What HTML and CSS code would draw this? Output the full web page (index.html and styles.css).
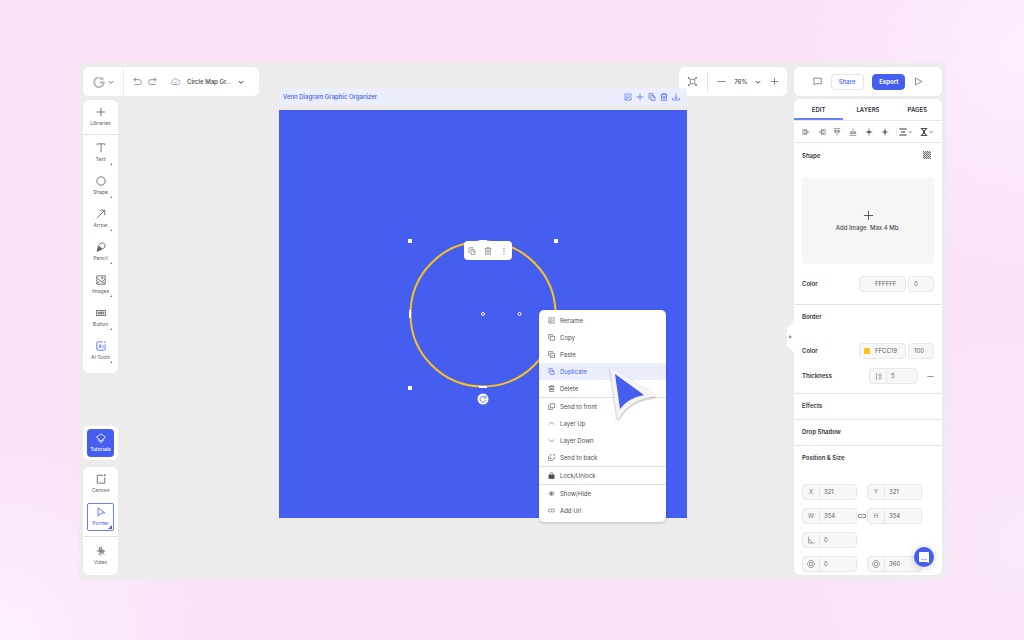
FILE: index.html
```html
<!DOCTYPE html>
<html lang="en">
<head>
    <meta charset="UTF-8">
    <meta name="viewport" content="width=device-width, initial-scale=1.0">
    <title>Circle Map Graphic Organizer</title>
    <link rel="stylesheet" href="styles.css">
</head>
<body>
<!-- Icon sprite -->
<svg class="sprite" width="0" height="0" aria-hidden="true">
    <symbol id="plus" viewBox="0 0 24 24"><path d="M12 2v20M2 12h20"/></symbol>
    <symbol id="minus" viewBox="0 0 24 24"><path d="M1 12h22"/></symbol>
    <symbol id="down" viewBox="0 0 24 24"><path d="M3 8l9 9 9-9"/></symbol>
    <symbol id="up" viewBox="0 0 24 24"><path d="M3 16l9-9 9 9"/></symbol>
    <symbol id="undo" viewBox="0 0 24 24"><path d="M8 2L2 7l6 5M2 7h14a6 6 0 0 1 0 13H4"/></symbol>
    <symbol id="redo" viewBox="0 0 24 24"><path d="M16 2l6 5-6 5M22 7H8a6 6 0 0 0 0 13h12"/></symbol>
    <symbol id="cloud" viewBox="0 0 24 24"><path d="M6 20a5 5 0 0 1-1-10 7 7 0 0 1 13-2 6 6 0 0 1 1 12zM8 14l3 3 6-6"/></symbol>
    <symbol id="logo" viewBox="0 0 24 24"><path d="M11 3a9.500 9.500 0 1 0 10.500 10H13M15 2l0 5M20 4l-2 4" stroke-width="4"/></symbol>
    <symbol id="text" viewBox="0 0 24 24"><path d="M3 5V2h18v3M12 2v20"/></symbol>
    <symbol id="circle" viewBox="0 0 24 24"><circle cx="12" cy="12" r="10"/></symbol>
    <symbol id="arrow" viewBox="0 0 24 24"><path d="M2 22L21 3M9 3h12v12"/></symbol>
    <symbol id="pencil" viewBox="0 0 24 24"><path d="M3 22L6 9c4-9 15-9 16-1 0 6-5 9-9 9zM3 22l9-10"/><path d="M3 22l4-11 7 6z" fill="currentColor"/></symbol>
    <symbol id="image" viewBox="0 0 24 24"><path d="M2 2h20v20H2zM3 21l7-8 4 4 8-8M14 15l7 6M3 6l5 6"/><circle cx="15" cy="7" r="2"/></symbol>
    <symbol id="button" viewBox="0 0 24 24"><path d="M1 6h22v12H1zM5 10h14v4H5zM10 10v4M14 10v4"/></symbol>
    <symbol id="ai" viewBox="0 0 24 24"><path d="M16 2H5a3 3 0 0 0-3 3v14a3 3 0 0 0 3 3h14a3 3 0 0 0 3-3V8M21 1v4" stroke-width="2"/><path d="M7 17l3-9 3 9M8 14h4M17 9v8" stroke-width="1.500"/></symbol>
    <symbol id="tutorial" viewBox="0 0 24 24"><path d="M1 10l11-8 11 8-11 9zM7 15v4l5 4 5-4v-4"/></symbol>
    <symbol id="frame" viewBox="0 0 24 24"><path d="M17 3H3v19h18V8M19 3h4M21 1v4"/></symbol>
    <symbol id="pointer" viewBox="0 0 24 24"><path d="M5 2l16 12-9 1-7 7z"/></symbol>
    <symbol id="video" viewBox="0 0 24 24"><path d="M12 1v22M8 3v9h4M2 12h20M12 5l4 4M17 9v8M12 13l-6 8M12 13l8 8"/></symbol>
    <symbol id="fit" viewBox="0 0 24 24"><path d="M6 6h12v12H6zM6 6L1 1M18 6l5-5M6 18l-5 5M18 18l5 5M1 5V1h4M19 1h4v4M1 19v4h4M19 23h4v-4"/></symbol>
    <symbol id="edit" viewBox="0 0 24 24"><path d="M13 3H3v18h18V11M8 16l1-5L19 1l4 4-10 10z"/></symbol>
    <symbol id="copy" viewBox="0 0 24 24"><path d="M9 7h7l5 5v10H9zM5 17H3V2h12v2M15 7v6h6"/></symbol>
    <symbol id="trash" viewBox="0 0 24 24"><path d="M2 5h20M8 5V2h8v3M4 5l1 17h14l1-17M9 9v9M12 9v9M15 9v9"/></symbol>
    <symbol id="download" viewBox="0 0 24 24"><path d="M12 2v15M7 12l5 5 5-5M2 15v6h20v-6"/></symbol>
    <symbol id="dots" viewBox="0 0 24 24"><g fill="currentColor" stroke="none"><circle cx="12" cy="4" r="2"/><circle cx="12" cy="12" r="2"/><circle cx="12" cy="20" r="2"/></g></symbol>
    <symbol id="layers" viewBox="0 0 24 24"><path d="M8 2h14v14H8zM5 8H2v14h14v-3"/></symbol>
    <symbol id="copies" viewBox="0 0 24 24"><path d="M8 8h14v14H8zM5 16H2V2h14v3"/></symbol>
    <symbol id="paste" viewBox="0 0 24 24"><path d="M8 8h14v14H8zM5 16H2V2h14v3M12 15l2 3 5-5"/></symbol>
    <symbol id="back" viewBox="0 0 24 24"><path d="M12 2H8v4M17 2h5v4M22 10v6h-4M8 10v6h5M5 8H2v14h14v-3"/></symbol>
    <symbol id="lock" viewBox="0 0 24 24"><path d="M3 10h18v13H3z" fill="currentColor"/><path d="M7 11V7a5 5 0 0 1 10 0v4"/></symbol>
    <symbol id="eye" viewBox="0 0 24 24"><path d="M1 12c6-8 16-8 22 0-6 8-16 8-22 0z"/><circle cx="12" cy="12" r="3" fill="currentColor"/></symbol>
    <symbol id="link" viewBox="0 0 24 24"><path d="M10 7H6a5 5 0 0 0 0 10h3c3 0 4-2 4-4M14 17h4a5 5 0 0 0 0-10h-3c-3 0-4 2-4 4"/></symbol>
    <symbol id="chat" viewBox="0 0 24 24"><path d="M2 3h20v15H7l-4 3z"/></symbol>
    <symbol id="play" viewBox="0 0 24 24"><path d="M4 3l17 9L4 21z"/></symbol>
    <symbol id="al-left" viewBox="0 0 24 24"><path d="M3 2v20M7 5h7v4H7zM7 15h7v4H7zM22 12h-9M17 8l-4 4 4 4"/></symbol>
    <symbol id="al-right" viewBox="0 0 24 24"><path d="M21 2v20M10 5h7v4h-7zM10 15h7v4h-7zM2 12h9M7 8l4 4-4 4"/></symbol>
    <symbol id="al-top" viewBox="0 0 24 24"><path d="M2 2h20M5 7h3v6H5zM16 7h3v6h-3zM12 22V7M9 10l3-3 3 3"/></symbol>
    <symbol id="al-bottom" viewBox="0 0 24 24"><path d="M2 22h20M5 11h3v6H5zM16 11h3v6h-3zM12 2v15M9 14l3 3 3-3"/></symbol>
    <symbol id="al-mid" viewBox="0 0 24 24"><path d="M12 1v22M2 12h20"/><path d="M8 9h8v6H8z" fill="currentColor"/></symbol>
    <symbol id="al-center" viewBox="0 0 24 24"><path d="M12 1v22M2 12h20"/><path d="M9 8h6v8H9z" fill="currentColor"/></symbol>
    <symbol id="dist-v" viewBox="0 0 24 24"><path d="M1 3h22M1 21h22M6 12h12" stroke-width="3"/></symbol>
    <symbol id="dist-h" viewBox="0 0 24 24"><path d="M2 2h20M2 22h20M6 3l6 9-6 9M18 3l-6 9 6 9M12 6v12" stroke-width="3"/></symbol>
    <symbol id="pattern" viewBox="0 0 24 24"><g stroke-width="3" stroke-dasharray="3 3"><path d="M0 2h24M3 5h21M0 8h24M3 11h21M0 14h24M3 17h21M0 20h24M3 23h21"/></g></symbol>
    <symbol id="thick" viewBox="0 0 24 24"><path d="M5 3v18M2 3h6M2 21h6M12 4h11M12 9h11M12 14h11M12 20h11"/></symbol>
    <symbol id="angle" viewBox="0 0 24 24"><path d="M5 2v19h17M5 11c6 0 9 4 9 10"/></symbol>
    <symbol id="ring" viewBox="0 0 24 24"><path d="M7 2h10l6 10-6 10H7L1 12z"/><circle cx="12" cy="12" r="5"/></symbol>
</svg>

<div class="app">
    <main class="main">
        <header class="topbar">
            <div class="card file-bar">
                <button class="logo-button" aria-label="Menu"><svg class="icon logo"><use href="#logo"/></svg><svg class="icon small"><use href="#down"/></svg></button>
                <button aria-label="Undo"><svg class="icon"><use href="#undo"/></svg></button>
                <button aria-label="Redo"><svg class="icon"><use href="#redo"/></svg></button>
                <button class="file-name"><svg class="icon cloud"><use href="#cloud"/></svg><span>Circle Map Gr...</span><svg class="icon small"><use href="#down"/></svg></button>
            </div>
            <div class="card zoom-bar">
                <button class="fit" aria-label="Fit to screen"><svg class="icon"><use href="#fit"/></svg></button>
                <button aria-label="Zoom out"><svg class="icon"><use href="#minus"/></svg></button>
                <button class="zoom-value">76% <svg class="icon small"><use href="#down"/></svg></button>
                <button aria-label="Zoom in"><svg class="icon"><use href="#plus"/></svg></button>
            </div>
        </header>

        <aside class="tools">
            <div class="card tool-list">
                <button class="tool first"><svg class="icon"><use href="#plus"/></svg>Libraries</button>
                <button class="tool more"><svg class="icon"><use href="#text"/></svg>Text</button>
                <button class="tool more"><svg class="icon"><use href="#circle"/></svg>Shape</button>
                <button class="tool more"><svg class="icon"><use href="#arrow"/></svg>Arrow</button>
                <button class="tool more"><svg class="icon"><use href="#pencil"/></svg>Pencil</button>
                <button class="tool more"><svg class="icon"><use href="#image"/></svg>Images</button>
                <button class="tool more"><svg class="icon"><use href="#button"/></svg>Button</button>
                <button class="tool more"><svg class="icon blue"><use href="#ai"/></svg>AI Tools</button>
            </div>
            <div class="card tutorials">
                <button class="tool"><svg class="icon"><use href="#tutorial"/></svg>Tutorials</button>
            </div>
            <div class="card modes">
                <button class="tool"><svg class="icon"><use href="#frame"/></svg>Canvas</button>
                <button class="tool more selected"><svg class="icon"><use href="#pointer"/></svg>Pointer</button>
                <button class="tool last"><svg class="icon"><use href="#video"/></svg>Video</button>
            </div>
        </aside>

        <section class="page">
            <div class="page-header">
                <h1>Venn Diagram Graphic Organizer</h1>
                <button aria-label="Rename page"><svg class="icon"><use href="#edit"/></svg></button>
                <button aria-label="Add page"><svg class="icon"><use href="#plus"/></svg></button>
                <button aria-label="Copy page"><svg class="icon"><use href="#copy"/></svg></button>
                <button aria-label="Delete page"><svg class="icon"><use href="#trash"/></svg></button>
                <button aria-label="Download page"><svg class="icon"><use href="#download"/></svg></button>
            </div>
            <div class="artboard">
                <svg class="drawing" viewBox="0 0 408 408">
                    <circle cx="204" cy="204" r="72.5" fill="none" stroke="#f9c31f" stroke-width="2"/>
                    <g fill="#fff">
                        <rect x="129" y="129" width="4" height="4"/>
                        <rect x="275" y="129" width="4" height="4"/>
                        <rect x="129" y="276" width="4" height="4"/>
                        <rect x="200" y="130" width="8" height="2"/>
                        <rect x="200" y="276" width="8" height="2"/>
                        <rect x="130" y="200" width="2" height="8"/>
                        <circle cx="204" cy="289" r="5.5"/>
                    </g>
                    <g fill="#455eef" stroke="#fff">
                        <circle cx="204" cy="204" r="1.5"/>
                        <circle cx="240.5" cy="204" r="1.5"/>
                    </g>
                    <path d="M206.500 287.500a3 3 0 1 0 .5 2.500M207 285.500v2.500h-2.500" fill="none" stroke="#6f80df"/>
                </svg>
                <div class="mini-bar">
                    <button aria-label="Copy"><svg class="icon"><use href="#copy"/></svg></button>
                    <button aria-label="Delete"><svg class="icon"><use href="#trash"/></svg></button>
                    <button aria-label="More"><svg class="icon"><use href="#dots"/></svg></button>
                </div>
                <div class="menu">
                    <button><svg class="icon"><use href="#edit"/></svg>Rename</button>
                    <button><svg class="icon"><use href="#copies"/></svg>Copy</button>
                    <button><svg class="icon"><use href="#paste"/></svg>Paste</button>
                    <button class="active"><svg class="icon"><use href="#copy"/></svg>Duplicate</button>
                    <button><svg class="icon"><use href="#trash"/></svg>Delete</button>
                    <hr>
                    <button><svg class="icon"><use href="#layers"/></svg>Send to front</button>
                    <button><svg class="icon"><use href="#up"/></svg>Layer Up</button>
                    <button><svg class="icon"><use href="#down"/></svg>Layer Down</button>
                    <button><svg class="icon"><use href="#back"/></svg>Send to back</button>
                    <hr>
                    <button><svg class="icon"><use href="#lock"/></svg>Lock/Unlock</button>
                    <hr>
                    <button><svg class="icon"><use href="#eye"/></svg>Show/Hide</button>
                    <button><svg class="icon"><use href="#link"/></svg>Add Url</button>
                </div>
                <svg class="cursor" viewBox="0 0 54 64">
                    <path d="M5 5Q3 3 5 5L48 32Q51 35 47 35Q24 38 13 56Q11 59 11 55L4 7z" fill="#f4f4f6"/>
                    <path d="M9 12L38 33Q22 36 14 47z" fill="#455eef"/>
                </svg>
            </div>
        </section>
    </main>

    <aside class="side">
        <div class="card share-bar">
            <button aria-label="Comments"><svg class="icon"><use href="#chat"/></svg></button>
            <button class="share">Share</button>
            <button class="export">Export</button>
            <button aria-label="Preview"><svg class="icon"><use href="#play"/></svg></button>
        </div>
        <button class="collapse" aria-label="Collapse panel"><svg viewBox="0 0 7 30"><path d="M7 0L2 4Q0 5 0 7v16q0 2 2 3l5 4z" fill="#fff"/><path d="M2 13l3 2-3 2z" fill="#999"/></svg></button>
        <div class="card panel">
            <nav class="tabs">
                <button class="active">EDIT</button>
                <button>LAYERS</button>
                <button>PAGES</button>
            </nav>
            <div class="align">
                <button aria-label="Align left"><svg class="icon"><use href="#al-left"/></svg></button>
                <button aria-label="Align right"><svg class="icon"><use href="#al-right"/></svg></button>
                <button aria-label="Align top"><svg class="icon"><use href="#al-top"/></svg></button>
                <button aria-label="Align bottom"><svg class="icon"><use href="#al-bottom"/></svg></button>
                <button aria-label="Align middle"><svg class="icon"><use href="#al-mid"/></svg></button>
                <button aria-label="Align center"><svg class="icon"><use href="#al-center"/></svg></button>
                <button class="distribute" aria-label="Distribute vertically"><svg class="icon"><use href="#dist-v"/></svg><svg class="icon tiny"><use href="#down"/></svg></button>
                <button aria-label="Distribute horizontally"><svg class="icon"><use href="#dist-h"/></svg><svg class="icon tiny"><use href="#down"/></svg></button>
            </div>
            <section class="section">
                <div class="section-title"><h2>Shape</h2><svg class="icon"><use href="#pattern"/></svg></div>
                <button class="upload"><svg class="icon"><use href="#plus"/></svg>Add Image. Max 4 Mb.</button>
                <div class="row">
                    <label for="fill">Color</label>
                    <span class="field color"><i class="swatch"></i><input id="fill" value="FFFFFF"></span>
                    <span class="field opacity"><input aria-label="Fill opacity" value="0"></span>
                </div>
            </section>
            <section class="section border">
                <h2>Border</h2>
                <div class="row">
                    <label for="stroke">Color</label>
                    <span class="field color"><i class="swatch yellow"></i><input id="stroke" value="FFCC19"></span>
                    <span class="field opacity"><input aria-label="Border opacity" value="100"></span>
                </div>
                <div class="row">
                    <label for="thickness">Thickness</label>
                    <span class="field thickness"><span class="prefix"><svg class="icon"><use href="#thick"/></svg></span><input id="thickness" value="5"></span>
                    <button aria-label="Remove border"><svg class="icon"><use href="#minus"/></svg></button>
                </div>
            </section>
            <section class="section"><h2>Effects</h2></section>
            <section class="section"><h2>Drop Shadow</h2></section>
            <section class="section position">
                <h2>Position &amp; Size</h2>
                <div class="grid">
                    <label class="field"><span class="prefix">X</span><input value="321"></label>
                    <span></span>
                    <label class="field"><span class="prefix">Y</span><input value="321"></label>
                    <label class="field"><span class="prefix">W</span><input value="354"></label>
                    <svg class="icon"><use href="#link"/></svg>
                    <label class="field"><span class="prefix">H</span><input value="354"></label>
                    <label class="field"><span class="prefix"><svg class="icon"><use href="#angle"/></svg></span><input aria-label="Rotation" value="0"></label>
                    <span></span>
                    <span></span>
                    <label class="field"><span class="prefix"><svg class="icon"><use href="#ring"/></svg></span><input aria-label="Arc start" value="0"></label>
                    <span></span>
                    <label class="field"><span class="prefix"><svg class="icon"><use href="#ring"/></svg></span><input aria-label="Arc end" value="360"></label>
                </div>
            </section>
            <button class="help" aria-label="Open chat"><svg viewBox="0 0 20 20"><path d="M6 5h8q1 0 1 1v10l-2-1H6q-1 0-1-1V6q0-1 1-1z" fill="#fff"/><path d="M7 12q3 2 6 0" fill="none" stroke="#9aa8f5"/></svg></button>
        </div>
    </aside>
</div>
</body>
</html>
```
FILE: styles.css
```css
* {
    box-sizing: border-box;
}

body {
    margin: 0;
    min-height: 100vh;
    display: flex;
    padding: 63px 78px 61px 79px;
    font-family: Inter, sans-serif;
    font-size: 6px;
    line-height: 10px;
    color: #4b4c55;
    background:
        radial-gradient(circle at 100% 8%, #fdeefd 0, #fdeefd00 220px),
        radial-gradient(circle at 0 100%, #fcf0fc 0, #fcf0fc00 200px),
        radial-gradient(circle at 100% 85%, #fbe8fa 0, #fbe8fa00 220px),
        #fae3f7;
}

h1, h2 {
    margin: 0;
    font-size: 6px;
    font-weight: 600;
}

button {
    display: flex;
    align-items: center;
    justify-content: center;
    padding: 0;
    border: none;
    background: none;
    font: inherit;
    color: inherit;
    cursor: pointer;
}

input {
    width: 100%;
    min-width: 0;
    padding: 0;
    border: none;
    background: none;
    font: inherit;
    color: #5a5b65;
}

.sprite {
    position: absolute;
}

.icon {
    display: block;
    flex: none;
    width: 9px;
    height: 9px;
    fill: none;
    stroke: currentColor;
    stroke-width: 2;
}

.icon.small {
    width: 6px;
    height: 6px;
    stroke-width: 4;
}

.icon.tiny {
    width: 4px;
    height: 4px;
    stroke-width: 4;
}

.icon.blue {
    color: #455eef;
}

.card {
    background: #ffffff;
    border-radius: 6px;
}

.app {
    flex: 1;
    display: flex;
    gap: 7px;
    padding: 4px;
    background: #ececec;
    border-radius: 4px;
}

.main {
    flex: 1;
    display: grid;
    grid-template-columns: 35px 1fr;
    grid-template-rows: 29px 1fr;
    row-gap: 4px;
}

/* Top bar */
.topbar {
    grid-column: 1 / -1;
    grid-row: 1;
    display: flex;
    justify-content: space-between;
}

.file-bar {
    display: flex;
    align-items: stretch;
    width: 176px;
    gap: 6px;
    color: #77787f;
}

.logo-button {
    gap: 3px;
    width: 41px;
    margin-right: 3px;
    border-right: 1px solid #ececec;
}

.icon.logo {
    width: 12px;
    height: 12px;
    color: #b9b9be;
}

.file-name {
    gap: 7px;
    margin-left: 8px;
    font-weight: 500;
    color: #3d3e48;
}

.icon.cloud {
    color: #8b90b8;
}

.zoom-bar {
    display: flex;
    align-items: center;
    width: 108px;
    padding: 0 8px 0 9px;
    justify-content: space-between;
    color: #666771;
}

.fit {
    height: 20px;
    padding-right: 10px;
    border-right: 1px solid #e4e4e6;
}

.zoom-value {
    gap: 8px;
    font-weight: 500;
    color: #3d3e48;
}

/* Tools */
.tools {
    grid-column: 1;
    grid-row: 2;
    display: flex;
    flex-direction: column;
    gap: 7px;
}

.tool {
    position: relative;
    flex-direction: column;
    gap: 2px;
    width: 100%;
    height: 33px;
    font-size: 5px;
    line-height: 8px;
    color: #5a5b65;
}

.tool .icon {
    width: 10px;
    height: 10px;
}

.tool.first {
    height: 35px;
    margin-bottom: 1px;
    border-bottom: 1px solid #e2e2e4;
}

.tool.more::after {
    content: "";
    position: absolute;
    right: 6px;
    bottom: 4px;
    border: 1px solid transparent;
    border-right-color: #77787f;
    border-bottom-color: #77787f;
}

.tool-list {
    padding-bottom: 6px;
}

.tutorials {
    margin-top: auto;
    padding: 3px 4px;
}

.tutorials .tool {
    height: 28px;
    border-radius: 4px;
    background: #455eef;
    font-weight: 500;
    color: #ffffff;
}

.modes {
    display: flex;
    flex-direction: column;
    align-items: center;
}

.tool.selected {
    width: 27px;
    height: 28px;
    margin: 3px 0 5px;
    border: 1px solid #6d80f2;
    border-radius: 2px;
    color: #455eef;
}

.tool.selected::after {
    right: 1px;
    bottom: 1px;
    border-width: 2px;
    border-right-color: #455eef;
    border-bottom-color: #455eef;
}

.tool.last {
    height: 39px;
    border-top: 1px solid #e2e2e4;
}

/* Page */
.page {
    grid-column: 2;
    grid-row: 1 / 3;
    justify-self: end;
    width: 408px;
    margin: 21px 100px 0 0;
}

.page-header {
    position: relative;
    display: flex;
    align-items: center;
    gap: 4px;
    height: 17px;
    padding: 0 7px 0 4px;
    margin-bottom: 5px;
    border-radius: 4px;
    background: #ebeefd;
    color: #455eef;
}

.page-header h1 {
    flex: 1;
    font-weight: 500;
}

.page-header .icon {
    width: 8px;
    height: 8px;
}

.artboard {
    position: relative;
    height: 408px;
    background: #455eef;
}

.drawing {
    display: block;
    width: 100%;
}

.mini-bar {
    position: absolute;
    top: 131px;
    left: 185px;
    display: flex;
    align-items: center;
    justify-content: space-around;
    width: 48px;
    height: 19px;
    border-radius: 4px;
    background: #ffffff;
    color: #77787f;
}

.mini-bar .icon {
    width: 8px;
    height: 8px;
}

.menu {
    position: absolute;
    top: 200px;
    left: 260px;
    width: 127px;
    padding: 2px 0 3px;
    border-radius: 5px;
    background: #ffffff;
    box-shadow: 0 1px 3px #00000033;
}

.menu button {
    justify-content: flex-start;
    gap: 5px;
    width: 100%;
    height: 17px;
    padding-left: 9px;
    color: #4b4c55;
}

.menu .icon {
    width: 7px;
    height: 7px;
}

.menu .active {
    background: #ebeefd;
    color: #455eef;
}

.menu hr {
    height: 1px;
    margin: 0;
    border: none;
    background: #dfdfe3;
}

.cursor {
    position: absolute;
    top: 252px;
    left: 327px;
    width: 54px;
    height: 64px;
    filter: drop-shadow(0 1px 1px #00000055);
}

/* Right side */
.side {
    position: relative;
    display: flex;
    flex-direction: column;
    gap: 3px;
    width: 148px;
}

.share-bar {
    display: flex;
    align-items: center;
    justify-content: space-between;
    height: 29px;
    padding: 0 19px;
    color: #666771;
}

.share, .export {
    width: 33px;
    height: 16px;
    border: 1px solid #e4e4e8;
    border-radius: 4px;
    font-weight: 500;
    color: #455eef;
}

.export {
    border-color: #455eef;
    background: #455eef;
    font-weight: 700;
    color: #ffffff;
}

.collapse {
    position: absolute;
    top: 255px;
    left: -7px;
    width: 7px;
    height: 30px;
}

.panel {
    position: relative;
    flex: 1;
    overflow: hidden;
}

.tabs {
    display: flex;
    height: 22px;
    border-bottom: 1px solid #e8e8ea;
}

.tabs button {
    flex: 1;
    padding-top: 2px;
    border-bottom: 2px solid transparent;
    font-weight: 600;
    color: #33343e;
}

.tabs .active {
    border-bottom-color: #6d80f2;
}

.align {
    display: flex;
    align-items: center;
    justify-content: space-between;
    height: 22px;
    padding: 0 9px 0 8px;
    border-bottom: 1px solid #e8e8ea;
    color: #666771;
}

.align button {
    gap: 2px;
}

.align .icon:not(.tiny) {
    width: 8px;
    height: 8px;
}

.distribute {
    height: 10px;
    padding-left: 2px;
    border-left: 1px solid #e8e8ea;
}

.align .distribute, .align .distribute + button {
    gap: 1px;
    color: #33343e;
}

.section {
    padding: 7px 8px 8px;
    border-bottom: 1px solid #e4e4e6;
}

.section h2 {
    color: #33343e;
}

.section-title {
    display: flex;
    justify-content: space-between;
    padding: 1px 3px 0 0;
}

.section-title .icon {
    width: 8px;
    height: 8px;
}

.upload {
    flex-direction: column;
    gap: 2px;
    width: 100%;
    height: 86px;
    margin: 17px 0 12px;
    border-radius: 4px;
    background: #f6f6f5;
    font-weight: 500;
}

.upload .icon {
    width: 11px;
    height: 11px;
}

.row {
    display: flex;
    align-items: center;
    gap: 2px;
    height: 16px;
    margin-bottom: 4px;
}

.row label {
    flex: 1;
    font-weight: 600;
    color: #33343e;
}

.field {
    display: flex;
    align-items: center;
    height: 16px;
    border: 1px solid #e8e8e8;
    border-radius: 4px;
    background: #f7f7f6;
}

.color {
    width: 47px;
    padding-left: 4px;
    gap: 5px;
}

.swatch {
    flex: none;
    width: 6px;
    height: 6px;
}

.yellow {
    background: #f9c31f;
}

.opacity {
    width: 26px;
    padding-left: 5px;
}

.border .row {
    margin: 21px 0 0;
}

.border .row + .row {
    margin: 9px 0 1px;
}

.thickness {
    width: 49px;
    margin-right: 7px;
}

.row .icon {
    width: 7px;
    height: 7px;
}

.prefix {
    flex: none;
    display: flex;
    align-items: center;
    justify-content: center;
    width: 17px;
    height: 100%;
    margin-right: 4px;
    border-right: 1px solid #e8e8e8;
    color: #77787f;
}

.position {
    padding-bottom: 2px;
    border-bottom: none;
}

.grid {
    display: grid;
    grid-template-columns: 55px 10px 55px;
    row-gap: 8px;
    align-items: center;
    justify-items: center;
    margin-top: 21px;
}

.grid .icon {
    width: 8px;
    height: 8px;
}

.help {
    position: absolute;
    right: 8px;
    bottom: 8px;
    width: 20px;
    height: 20px;
    border-radius: 50%;
    background: #455eef;
    box-shadow: 0 1px 8px #00000033;
}
```
